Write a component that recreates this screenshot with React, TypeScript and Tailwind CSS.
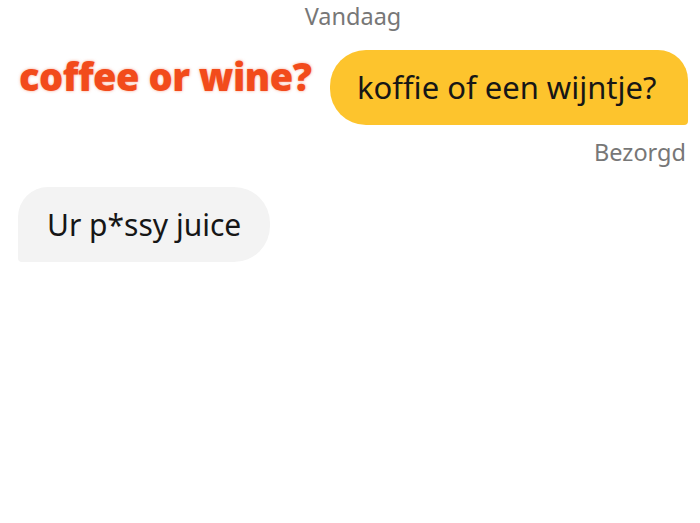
export default function App() {
  return (
    <div className="w-[700px] h-[523px] bg-white overflow-hidden flex flex-col" style={{ fontFamily: "'Noto Sans', sans-serif" }}>
      <div className="pt-px text-center text-[23.5px] leading-[30px] text-[#777777] pl-[6px]">Vandaag</div>

      <div className="mt-[19px] flex items-start justify-between pl-[19px] pr-[12px]">
        <span
          className="mt-[1px] text-[38px] leading-[50px] font-extrabold text-[#f24b1b] tracking-[-0.5px]"
          style={{ fontFamily: "'Open Sans', sans-serif", textShadow: "0 0 3px rgba(242,75,27,0.5)" }}
        >
          coffee or wine?
        </span>
        <div className="w-[358px] h-[75px] bg-[#fdc42d] rounded-l-[36px] rounded-tr-[30px] rounded-br-[4px] flex items-center pl-[27px]">
          <span className="text-[31px] text-[#161616] leading-none">koffie of een wijntje?</span>
        </div>
      </div>

      <div className="mt-[12px] pr-[14px] text-right text-[23.5px] leading-[30px] text-[#777777]">Bezorgd</div>

      <div className="mt-[20px] pl-[18px]">
        <div className="w-[252px] h-[75px] bg-[#f3f3f3] rounded-r-[36px] rounded-tl-[30px] rounded-bl-[4px] flex items-center pl-[29px]">
          <span className="text-[30px] text-[#161616] leading-none">Ur p*ssy juice</span>
        </div>
      </div>
    </div>
  );
}
